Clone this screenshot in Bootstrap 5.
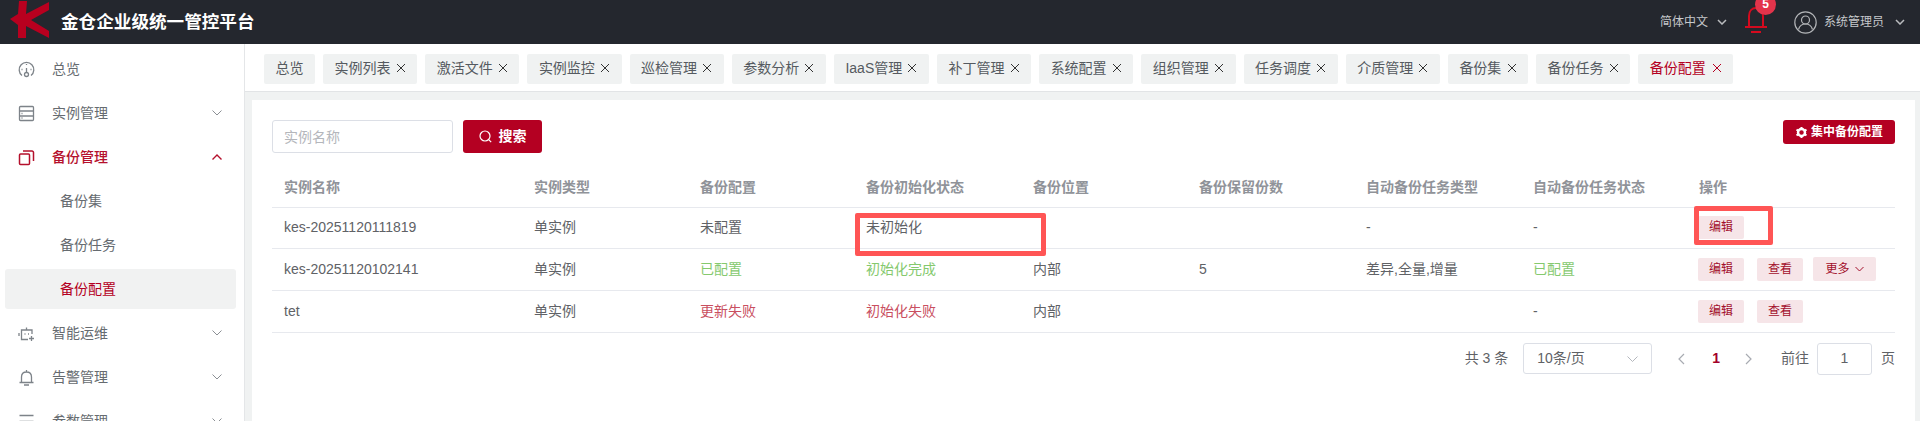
<!DOCTYPE html>
<html lang="zh-CN">
<head>
<meta charset="utf-8">
<title>备份配置</title>
<link href="https://cdn.jsdelivr.net/npm/bootstrap@5.3.0/dist/css/bootstrap.min.css" rel="stylesheet">
<style>
html,body{height:421px;overflow:hidden}
body{position:relative;font-family:"Liberation Sans","Noto Sans CJK SC",sans-serif;font-size:14px;color:#606266;background:#fff}
.top-bar{height:44px;background:#24272e;padding:0;flex-wrap:nowrap}
.brand-mark{width:60px;height:44px;flex:none}
.brand-name{color:#fff;font-size:17.6px;font-weight:700;margin-left:1px;line-height:44px}
.top-txt{color:#c6c8cb;font-size:12px}
.top-chev{color:#b9bbbe;width:10px;height:6px}
.chev-lang{margin-left:9px}
.chev-user{margin:0 15px 0 11px}
.bell-box{position:relative;width:26px;height:44px;margin-left:16px;margin-right:25px;flex:none}
.bell-svg{display:block}
.bell-count{position:absolute;left:12px;top:-6px;width:21px;height:21px;border-radius:50%;background:#e3344b;color:#fff;font-size:12px;font-weight:700;line-height:21px;text-align:center}
.user-name{margin-left:7px}
.body-wrap{height:377px}
.side-nav{width:245px;flex:none;border-right:1px solid #e4e6e8;padding-top:3px;overflow:hidden;height:377px;background:#fff}
.side-item{height:44px;padding:0 22px 0 18px;color:#666b70;flex:none}
.side-ico{width:17px;height:17px;margin-right:17px;flex:none;color:#7d8389}
.side-lbl{flex:1 1 auto}
.side-chev{width:10px;height:6px;color:#8b8f94}
.side-open,.side-open .side-ico,.side-open .side-chev{color:#b5102c}
.side-sub{height:40px;margin:2px 8px 2px 5px;padding-left:55px;color:#666b70;border-radius:3px;flex:none}
.side-sub-on{background:#f1f2f2;color:#b40022}
.main-pane{flex:1 1 auto;min-width:0;background:#f0f2f2}
.tab-strip{height:48px;background:#fff;border-bottom:1px solid #e2e4e6;padding:10px 0 0 19px;gap:8px;flex-wrap:nowrap}
.tab-chip{height:30px;padding:0 11.5px 2px;background:#f0f2f2;border-radius:2px;color:#555a60;flex:none;white-space:nowrap}
.tab-x{width:10px;height:10px;margin-left:5.2px;color:#333}
.tab-on,.tab-on .tab-x{color:#b40022}
.tab-on .tab-x{margin-left:6px;width:10px;height:10px}
.panel-box{margin:8px 5px 0 7px;padding:20px;background:#fff;height:321px;border:0;border-radius:0}
.filter-row{height:33px;margin-bottom:17px}
.name-input{width:181px;height:33px;font-size:14px;padding:0 11px;border-color:#dcdfe6;border-radius:3px;color:#606266}
.name-input::placeholder{color:#b4b6bb}
.search-btn{width:79px;height:33px;margin-left:10px;padding:0;font-size:14px;font-weight:700;background:#b40022;border:0;border-radius:3px;color:#fff}
.central-btn{width:112px;height:24px;padding:0;font-size:12px;font-weight:700;background:#b40022;border:0;border-radius:3px;color:#fff;margin-left:auto}
.ico-search{width:13px;height:13px;margin-right:7px}
.ico-gear{width:13px;height:13px;margin-right:3px}
.data-tbl{table-layout:fixed;width:1623px;margin:0;--bs-table-color:#606266;font-size:14px}
.data-tbl th,.data-tbl td{padding:0 12px;border-bottom:1px solid #e7e9ee;vertical-align:middle;white-space:nowrap;height:42px}
.data-tbl th{height:37px;color:#909399;font-weight:700;padding-bottom:1px}
.data-tbl td:last-child{padding-left:11px}
.data-tbl tbody tr:first-child td{height:41px}
.c1{width:250px}.c2,.c3,.c5,.c8{width:166px}.c4,.c6,.c7{width:167px}
.st-ok{color:#85c96e}.st-bad{color:#c94f5f}
.act-btn{height:23px;padding:0;width:46px;font-size:12px;line-height:23px;background:#f6e5e8;color:#a3102c;border:0;border-radius:2px;margin-right:13px;vertical-align:middle}
.act-more{width:63px;height:24px;margin-right:0;margin-left:-3px}
.act-chev{width:9px;height:6px;margin-left:5px}
.pager-row{margin-top:10px;height:32px;font-size:14px;color:#606266;justify-content:flex-end}
.page-size{width:129px;height:31px;border:1px solid #dcdfe6;border-radius:3px;padding:0 13px;margin-left:15px;color:#606266}
.page-arrow{width:7px;height:12px;color:#a8abb2}
.arrow-prev{margin-left:26px}
.page-now{color:#a3002a;font-weight:700;margin:0 25px 0 27px}
.jump-lbl{margin-left:29px}
.page-jump{width:55px;height:32px;border:1px solid #dcdfe6;border-radius:3px;margin:0 9px 0 8px}
.mark-box{position:absolute;border:5px solid #ff5555;border-radius:2px;pointer-events:none}
.mark-a{left:855px;top:213px;width:191px;height:43px}
.mark-b{left:1694px;top:206px;width:79px;height:39px}
</style>
</head>
<body>
<nav class="navbar top-bar d-flex align-items-center">
  <svg class="brand-mark" viewBox="0 0 60 44"><polygon fill="#b8001f" points="19,1 27,1 26,14 49,2 49,10 31,20 49,31 49,38 26,26 26,38 18,38 18,25 10,19 18,14"/></svg>
  <span class="brand-name">金仓企业级统一管控平台</span>
  <div class="ms-auto d-flex align-items-center h-100">
    <span class="top-txt">简体中文</span>
    <svg class="top-chev chev-lang" viewBox="0 0 10 6"><path d="M1 1l4 4 4-4" fill="none" stroke="currentColor" stroke-width="1.5"/></svg>
    <div class="bell-box">
      <svg class="bell-svg" width="26" height="36" viewBox="0 0 26 36"><path d="M6 26V16c0-5 3-8 7-8s7 3 7 8v10M2 27h22M8 32h10" fill="none" stroke="#d40a1e" stroke-width="2"/></svg>
      <span class="bell-count">5</span>
    </div>
    <svg width="23" height="23" viewBox="0 0 23 23"><g fill="none" stroke="#b2b4b7" stroke-width="1.2"><circle cx="11.5" cy="11.5" r="10.7"/><circle cx="11.5" cy="9" r="4"/><path d="M4.5 18.5c1-3.500 3.500-5.500 7-5.500s6 2 7 5.500"/></g></svg>
    <span class="top-txt user-name">系统管理员</span>
    <svg class="top-chev chev-user" viewBox="0 0 10 6"><path d="M1 1l4 4 4-4" fill="none" stroke="currentColor" stroke-width="1.5"/></svg>
  </div>
</nav>

<div class="d-flex body-wrap">
  <aside class="side-nav d-flex flex-column">
    <div class="side-item d-flex align-items-center">
      <svg class="side-ico" viewBox="0 0 17 17"><g fill="none" stroke="currentColor" stroke-width="1.3"><path d="M4 14.500A7.300 7.300 0 1 1 13 14.500"/><circle cx="8.500" cy="13.500" r="2"/><path d="M8.500 11.500V7M3.500 8.500h1M12.500 8.500h1M8.500 3v1"/></g></svg>
      <span class="side-lbl">总览</span>
    </div>
    <div class="side-item d-flex align-items-center">
      <svg class="side-ico" viewBox="0 0 17 17"><g fill="none" stroke="currentColor" stroke-width="1.300"><rect x="1.500" y="1.500" width="14" height="14" rx="1"/><path d="M1.500 6h14M1.500 11h14M3.500 8.500h1M3.500 13h1"/></g></svg>
      <span class="side-lbl">实例管理</span>
      <svg class="side-chev" viewBox="0 0 10 6"><path d="M.5.5L5 5 9.500.5" fill="none" stroke="currentColor"/></svg>
    </div>
    <div class="side-item side-open d-flex align-items-center">
      <svg class="side-ico" viewBox="0 0 17 17"><g fill="none" stroke="currentColor" stroke-width="1.500"><rect x="1.500" y="5" width="10" height="10.500" rx="1"/><path d="M5 2h9a1.500 1.500 0 0 1 1.500 1.500V12"/></g></svg>
      <span class="side-lbl fw-medium">备份管理</span>
      <svg class="side-chev" viewBox="0 0 10 6"><path d="M.5 5.500L5 1l4.500 4.500" fill="none" stroke="currentColor" stroke-width="1.400"/></svg>
    </div>
    <div class="side-sub d-flex align-items-center">备份集</div>
    <div class="side-sub d-flex align-items-center">备份任务</div>
    <div class="side-sub side-sub-on d-flex align-items-center">备份配置</div>
    <div class="side-item d-flex align-items-center">
      <svg class="side-ico" viewBox="0 0 17 17"><g fill="none" stroke="currentColor" stroke-width="1.300"><path d="M14 9V5H3.500v9.500H10M8.500 5V2.500M1 8v3M11 13.500h5M13.500 11v5"/><path d="M6.500 9h1M10 9h1"/></g></svg>
      <span class="side-lbl">智能运维</span>
      <svg class="side-chev" viewBox="0 0 10 6"><path d="M.5.5L5 5 9.500.5" fill="none" stroke="currentColor"/></svg>
    </div>
    <div class="side-item d-flex align-items-center">
      <svg class="side-ico" viewBox="0 0 17 17"><g fill="none" stroke="currentColor" stroke-width="1.300"><path d="M3.500 13V8c0-3 2-5 5-5s5 2 5 5v5M1.500 13.500h14M6 16h5M8.500 1v2"/></g></svg>
      <span class="side-lbl">告警管理</span>
      <svg class="side-chev" viewBox="0 0 10 6"><path d="M.5.5L5 5 9.500.5" fill="none" stroke="currentColor"/></svg>
    </div>
    <div class="side-item d-flex align-items-center">
      <svg class="side-ico" viewBox="0 0 17 17"><path d="M1.500 2.500h14M1.500 8.500h14M1.500 14.500h14" fill="none" stroke="currentColor" stroke-width="1.300"/></svg>
      <span class="side-lbl">参数管理</span>
      <svg class="side-chev" viewBox="0 0 10 6"><path d="M.5.5L5 5 9.500.5" fill="none" stroke="currentColor"/></svg>
    </div>
  </aside>

  <main class="main-pane d-flex flex-column">
    <div class="tab-strip d-flex align-items-start">
      <span class="tab-chip d-flex align-items-center">总览</span>
      <span class="tab-chip d-flex align-items-center">实例列表<svg class="tab-x" viewBox="0 0 10 10"><path d="M1 1l8 8M9 1l-8 8" stroke="currentColor" fill="none"/></svg></span>
      <span class="tab-chip d-flex align-items-center">激活文件<svg class="tab-x" viewBox="0 0 10 10"><path d="M1 1l8 8M9 1l-8 8" stroke="currentColor" fill="none"/></svg></span>
      <span class="tab-chip d-flex align-items-center">实例监控<svg class="tab-x" viewBox="0 0 10 10"><path d="M1 1l8 8M9 1l-8 8" stroke="currentColor" fill="none"/></svg></span>
      <span class="tab-chip d-flex align-items-center">巡检管理<svg class="tab-x" viewBox="0 0 10 10"><path d="M1 1l8 8M9 1l-8 8" stroke="currentColor" fill="none"/></svg></span>
      <span class="tab-chip d-flex align-items-center">参数分析<svg class="tab-x" viewBox="0 0 10 10"><path d="M1 1l8 8M9 1l-8 8" stroke="currentColor" fill="none"/></svg></span>
      <span class="tab-chip d-flex align-items-center">IaaS管理<svg class="tab-x" viewBox="0 0 10 10"><path d="M1 1l8 8M9 1l-8 8" stroke="currentColor" fill="none"/></svg></span>
      <span class="tab-chip d-flex align-items-center">补丁管理<svg class="tab-x" viewBox="0 0 10 10"><path d="M1 1l8 8M9 1l-8 8" stroke="currentColor" fill="none"/></svg></span>
      <span class="tab-chip d-flex align-items-center">系统配置<svg class="tab-x" viewBox="0 0 10 10"><path d="M1 1l8 8M9 1l-8 8" stroke="currentColor" fill="none"/></svg></span>
      <span class="tab-chip d-flex align-items-center">组织管理<svg class="tab-x" viewBox="0 0 10 10"><path d="M1 1l8 8M9 1l-8 8" stroke="currentColor" fill="none"/></svg></span>
      <span class="tab-chip d-flex align-items-center">任务调度<svg class="tab-x" viewBox="0 0 10 10"><path d="M1 1l8 8M9 1l-8 8" stroke="currentColor" fill="none"/></svg></span>
      <span class="tab-chip d-flex align-items-center">介质管理<svg class="tab-x" viewBox="0 0 10 10"><path d="M1 1l8 8M9 1l-8 8" stroke="currentColor" fill="none"/></svg></span>
      <span class="tab-chip d-flex align-items-center">备份集<svg class="tab-x" viewBox="0 0 10 10"><path d="M1 1l8 8M9 1l-8 8" stroke="currentColor" fill="none"/></svg></span>
      <span class="tab-chip d-flex align-items-center">备份任务<svg class="tab-x" viewBox="0 0 10 10"><path d="M1 1l8 8M9 1l-8 8" stroke="currentColor" fill="none"/></svg></span>
      <span class="tab-chip tab-on d-flex align-items-center">备份配置<svg class="tab-x" viewBox="0 0 10 10"><path d="M1 1l8 8M9 1l-8 8" stroke="currentColor" fill="none"/></svg></span>
    </div>

    <section class="panel-box">
      <div class="filter-row d-flex align-items-start">
        <input class="form-control name-input" type="text" placeholder="实例名称">
        <button class="btn search-btn d-flex align-items-center justify-content-center" type="button">
          <svg class="ico-search" viewBox="0 0 13 13"><g fill="none" stroke="#fff" stroke-width="1.200"><circle cx="6" cy="6" r="5"/><path d="M9.700 9.700l2.500 2.500"/></g></svg>搜索
        </button>
        <button class="btn central-btn d-flex align-items-center justify-content-center" type="button">
          <svg class="ico-gear" viewBox="0 0 13 13"><circle cx="6.500" cy="6.500" r="3.500" fill="none" stroke="#fff" stroke-width="2.500"/><path d="M6.500 1v2M6.500 10v2M1.500 3.700l1.700 1M9.800 8.300l1.700 1M1.500 9.300l1.700-1M9.800 4.700l1.700-1" stroke="#fff" stroke-width="2"/></svg>集中备份配置
        </button>
      </div>

      <table class="table data-tbl">
        <thead>
          <tr>
            <th class="c1">实例名称</th><th class="c2">实例类型</th><th class="c3">备份配置</th><th class="c4">备份初始化状态</th><th class="c5">备份位置</th><th class="c6">备份保留份数</th><th class="c7">自动备份任务类型</th><th class="c8">自动备份任务状态</th><th>操作</th>
          </tr>
        </thead>
        <tbody>
          <tr>
            <td>kes-20251120111819</td><td>单实例</td><td>未配置</td><td>未初始化</td><td></td><td></td><td>-</td><td>-</td>
            <td><button class="btn act-btn" type="button">编辑</button></td>
          </tr>
          <tr>
            <td>kes-20251120102141</td><td>单实例</td><td class="st-ok">已配置</td><td class="st-ok">初始化完成</td><td>内部</td><td>5</td><td>差异,全量,增量</td><td class="st-ok">已配置</td>
            <td><button class="btn act-btn" type="button">编辑</button><button class="btn act-btn" type="button">查看</button><button class="btn act-btn act-more" type="button">更多<svg class="act-chev" viewBox="0 0 9 6"><path d="M.5 1L4.500 5 8.500 1" fill="none" stroke="currentColor"/></svg></button></td>
          </tr>
          <tr>
            <td>tet</td><td>单实例</td><td class="st-bad">更新失败</td><td class="st-bad">初始化失败</td><td>内部</td><td></td><td></td><td>-</td>
            <td><button class="btn act-btn" type="button">编辑</button><button class="btn act-btn" type="button">查看</button></td>
          </tr>
        </tbody>
      </table>

      <div class="pager-row d-flex align-items-center">
        <span>共 3 条</span>
        <div class="page-size d-flex align-items-center justify-content-between">
          <span>10条/页</span>
          <svg width="11" height="6" viewBox="0 0 11 6"><path d="M.5.500l5 5 5-5" fill="none" stroke="#b4b7bd"/></svg>
        </div>
        <svg class="page-arrow arrow-prev" viewBox="0 0 7 12"><path d="M6 1L1 6l5 5" fill="none" stroke="currentColor" stroke-width="1.200"/></svg>
        <span class="page-now">1</span>
        <svg class="page-arrow" viewBox="0 0 7 12"><path d="M1 1l5 5-5 5" fill="none" stroke="currentColor" stroke-width="1.200"/></svg>
        <span class="jump-lbl">前往</span>
        <div class="page-jump d-flex align-items-center justify-content-center">1</div>
        <span>页</span>
      </div>
    </section>
  </main>
</div>

<div class="mark-box mark-a"></div>
<div class="mark-box mark-b"></div>
<script src="https://cdn.jsdelivr.net/npm/bootstrap@5.3.0/dist/js/bootstrap.bundle.min.js"></script>
</body>
</html>
